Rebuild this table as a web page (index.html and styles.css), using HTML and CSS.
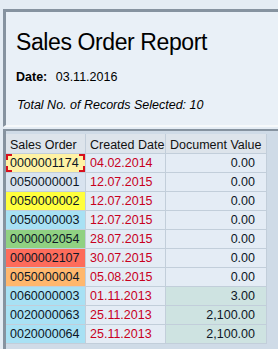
FILE: index.html
```html
<!DOCTYPE html>
<html lang="en">
<head>
    <meta charset="UTF-8">
    <title>Sales Order Report</title>
    <link rel="stylesheet" href="styles.css">
</head>
<body>
    <div class="report-header">
        <h1>Sales Order Report</h1>
        <p class="report-date"><b>Date:</b> 03.11.2016</p>
        <p class="report-total">Total No. of Records Selected: 10</p>
    </div>

    <div class="grid-frame">
        <table class="grid">
            <thead>
                <tr>
                    <th class="col-order">Sales Order</th>
                    <th class="col-date">Created Date</th>
                    <th class="col-value">Document Value</th>
                </tr>
            </thead>
            <tbody>
                <tr>
                    <td class="order focus c-light-yellow">0000001174</td>
                    <td class="date">04.02.2014</td>
                    <td class="value">0.00</td>
                </tr>
                <tr>
                    <td class="order">0050000001</td>
                    <td class="date">12.07.2015</td>
                    <td class="value">0.00</td>
                </tr>
                <tr>
                    <td class="order c-yellow">0050000002</td>
                    <td class="date">12.07.2015</td>
                    <td class="value">0.00</td>
                </tr>
                <tr>
                    <td class="order c-cyan">0050000003</td>
                    <td class="date">12.07.2015</td>
                    <td class="value">0.00</td>
                </tr>
                <tr>
                    <td class="order c-green">0000002054</td>
                    <td class="date">28.07.2015</td>
                    <td class="value">0.00</td>
                </tr>
                <tr>
                    <td class="order c-red">0000002107</td>
                    <td class="date">30.07.2015</td>
                    <td class="value">0.00</td>
                </tr>
                <tr>
                    <td class="order c-orange">0050000004</td>
                    <td class="date">05.08.2015</td>
                    <td class="value">0.00</td>
                </tr>
                <tr>
                    <td class="order c-cyan">0060000003</td>
                    <td class="date">01.11.2013</td>
                    <td class="value paid">3.00</td>
                </tr>
                <tr>
                    <td class="order c-cyan">0020000063</td>
                    <td class="date">25.11.2013</td>
                    <td class="value paid">2,100.00</td>
                </tr>
                <tr>
                    <td class="order c-cyan">0020000064</td>
                    <td class="date">25.11.2013</td>
                    <td class="value paid">2,100.00</td>
                </tr>
            </tbody>
        </table>
    </div>
</body>
</html>
```

FILE: styles.css
```css
body {
    font-family: "Liberation Sans", Arial, sans-serif;
    margin: 0;
    padding-top: 9px;
    background-color: #e4ecf4;
    color: #000;
}
.report-header {
    margin-left: 3px;
    height: 96px;
    padding: 17px 10px 0;
    background-color: #e9f0f7;
    border-top: 3px solid #8693a0;
    border-left: 3px solid #8693a0;
    border-bottom: 2px solid #f6f9fb;
}
.report-header h1 {
    margin: 0;
    font-size: 23px;
    font-weight: normal;
    letter-spacing: -0.4px;
    line-height: 26px;
}
.report-date {
    margin: 14px 0 0;
    font-size: 12.5px;
    line-height: 16px;
}
.report-date b {
    margin-right: 5px;
}
.report-total {
    margin: 12px 0 0 1px;
    font-size: 12.5px;
    font-style: italic;
    line-height: 16px;
}
.grid-frame {
    margin: 2px 0 0 3px;
    padding-top: 3px;
    height: 216px;
    background-color: #cfdbe7;
    border-top: 2px solid #8693a0;
    border-left: 3px solid #8693a0;
}
.grid {
    width: 261px;
    table-layout: fixed;
    border-collapse: separate;
    border-spacing: 0;
    font-size: 12.5px;
    line-height: 16px;
}
.grid th,
.grid td {
    box-sizing: border-box;
    padding: 0 4px;
    border-right: 1px solid #c2ceda;
    border-bottom: 1px solid #c2ceda;
    white-space: nowrap;
    overflow: hidden;
    vertical-align: top;
}
.grid th {
    height: 20px;
    padding-top: 3px;
    font-weight: normal;
    text-align: left;
    color: #111;
    background-color: #dde4eb;
}
.col-order { width: 80px; }
.col-date { width: 80px; }
.col-value { width: 101px; }
.grid td {
    height: 19px;
    padding-top: 1px;
    background-color: #e4ecf5;
    color: #0d1726;
}
.grid td.order {
    background-color: #d8e3ef;
}
.grid td.date {
    color: #c8001e;
}
.grid td.value {
    text-align: right;
    padding-right: 11px;
}
.grid td.paid {
    background-color: #cee3e1;
}
.grid td.c-light-yellow { background-color: #fff2a4; }
.grid td.c-yellow { background-color: #ffff3e; }
.grid td.c-cyan { background-color: #a8e1f4; }
.grid td.c-green { background-color: #90d182; }
.grid td.c-red { background-color: #fd6c5b; }
.grid td.c-orange { background-color: #ffb76d; }
.grid td.focus {
    background-image:
        linear-gradient(#d8101c, #d8101c), linear-gradient(#d8101c, #d8101c),
        linear-gradient(#d8101c, #d8101c), linear-gradient(#d8101c, #d8101c),
        linear-gradient(#d8101c, #d8101c), linear-gradient(#d8101c, #d8101c),
        linear-gradient(#d8101c, #d8101c), linear-gradient(#d8101c, #d8101c);
    background-size: 6px 2px, 2px 6px, 6px 2px, 2px 6px, 6px 2px, 2px 6px, 6px 2px, 2px 6px;
    background-position: left top, left top, right top, right top, left bottom, left bottom, right bottom, right bottom;
    background-repeat: no-repeat;
}
```
